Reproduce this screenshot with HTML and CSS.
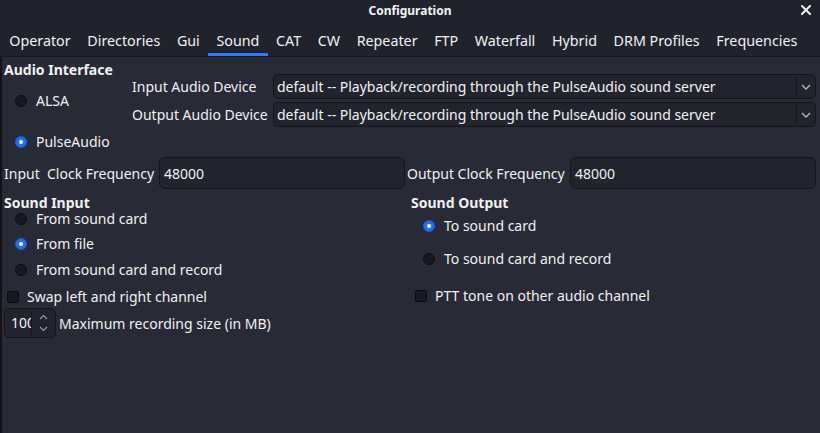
FILE: index.html
```html
<!DOCTYPE html>
<html>
<head>
<meta charset="utf-8">
<link rel="stylesheet" href="styles.css">
</head>
<body>
<div class="window">
  <div class="titlebar">
    <span class="title">Configuration</span>
    <span class="close">
      <svg width="10" height="10" viewBox="0 0 10 10"><path d="M1 1 L9 9 M9 1 L1 9" stroke="#f2f2f2" stroke-width="2" stroke-linecap="square"/></svg>
    </span>
  </div>
  <div class="tabs">
    <span class="tab">Operator</span>
    <span class="tab">Directories</span>
    <span class="tab">Gui</span>
    <span class="tab active">Sound</span>
    <span class="tab">CAT</span>
    <span class="tab">CW</span>
    <span class="tab">Repeater</span>
    <span class="tab">FTP</span>
    <span class="tab">Waterfall</span>
    <span class="tab">Hybrid</span>
    <span class="tab">DRM Profiles</span>
    <span class="tab">Frequencies</span>
  </div>
  <div class="panel">
    <div class="iface">
      <div class="iface-left">
        <div class="heading">Audio Interface</div>
        <div class="opt alsa"><span class="radio"></span>ALSA</div>
        <div class="opt pulse"><span class="radio on"></span>PulseAudio</div>
      </div>
      <div class="devices">
        <div class="dev-label">Input Audio Device</div>
        <div class="combo"><span class="combo-text">default -- Playback/recording through the PulseAudio sound server</span><span class="combo-btn"><svg width="10" height="6" viewBox="0 0 10 6"><path d="M1 1 L5 5 L9 1" fill="none" stroke="#b8bac0" stroke-width="1.3"/></svg></span></div>
        <div class="dev-label">Output Audio Device</div>
        <div class="combo"><span class="combo-text">default -- Playback/recording through the PulseAudio sound server</span><span class="combo-btn"><svg width="10" height="6" viewBox="0 0 10 6"><path d="M1 1 L5 5 L9 1" fill="none" stroke="#b8bac0" stroke-width="1.3"/></svg></span></div>
      </div>
    </div>
    <div class="clock">
      <span class="clk-label in">Input&nbsp; Clock Frequency</span>
      <div class="field f-in">48000</div>
      <span class="clk-label out">Output Clock Frequency</span>
      <div class="field f-out">48000</div>
    </div>
    <div class="sound">
      <div class="col left">
        <div class="heading">Sound Input</div>
        <div class="opt s1"><span class="radio"></span>From sound card</div>
        <div class="opt s2"><span class="radio on"></span>From file</div>
        <div class="opt s3"><span class="radio"></span>From sound card and record</div>
        <div class="chk"><span class="box"></span>Swap left and right channel</div>
        <div class="spinrow">
          <div class="spin"><span class="spin-val">100</span><span class="spin-btns">
            <svg width="9" height="6" viewBox="0 0 9 6"><path d="M1 5 L4.5 1.5 L8 5" fill="none" stroke="#9a9ca3" stroke-width="1.1"/></svg>
            <svg width="9" height="6" viewBox="0 0 9 6"><path d="M1 1 L4.5 4.5 L8 1" fill="none" stroke="#9a9ca3" stroke-width="1.1"/></svg>
          </span></div>
          <span class="spin-label">Maximum recording size (in MB)</span>
        </div>
      </div>
      <div class="col right">
        <div class="heading">Sound Output</div>
        <div class="opt o1"><span class="radio on"></span>To sound card</div>
        <div class="opt o2"><span class="radio"></span>To sound card and record</div>
        <div class="chk ptt"><span class="box"></span>PTT tone on other audio channel</div>
      </div>
    </div>
  </div>
</div>
</body>
</html>
```
FILE: styles.css
```css
* { box-sizing: border-box; }
html, body { margin: 0; padding: 0; }
body {
  width: 820px;
  height: 433px;
  overflow: hidden;
  background: #20232b;
  font-family: "Noto Sans", "DejaVu Sans", sans-serif;
  font-size: 14px;
  color: #f0f1f4;
}
.window { width: 820px; height: 433px; display: flex; flex-direction: column; }
.titlebar {
  height: 20px;
  display: flex;
  align-items: center;
  justify-content: center;
  position: relative;
  font-size: 12px;
  font-weight: bold;
  color: #f4f4f6;
}
.close { position: absolute; right: 9px; top: 5px; line-height: 0; }
.tabs {
  height: 36px;
  display: flex;
  padding-left: 1px;
  align-items: stretch;
}
.tab {
  padding: 11px 8.3px 0 8.3px;
  font-size: 14.3px;
  border-bottom: 3px solid transparent;
}
.tab.active { border-bottom-color: #2a7cf6; }
.panel {
  flex: 1;
  background: #282a35;
  border-top: 1px solid #17181d;
  border-left: 2px solid #121317;
  padding: 0 4px 0 2px;
  display: flex;
  flex-direction: column;
}
.heading { font-weight: bold; line-height: 20px; }
.iface { display: flex; align-items: flex-start; }
.iface-left { width: 128px; padding-top: 3px; }
.opt { display: flex; align-items: center; line-height: 20px; }
.radio {
  width: 12px; height: 12px; border-radius: 50%;
  background: #17191e;
  border: 1px solid #0c0d10;
  margin: 0 9px 0 11px;
  flex: none;
  position: relative;
}
.radio.on { background: #1f6ff0; border-color: #1a5fd0; }
.radio.on::after {
  content: ""; position: absolute; left: 3px; top: 3px;
  width: 4px; height: 4px; border-radius: 50%; background: #fff;
}
.alsa { margin-top: 11px; }
.pulse { margin-top: 21px; }
.devices {
  flex: 1;
  display: grid;
  grid-template-columns: 141px 1fr;
  row-gap: 3px;
  align-items: center;
  align-content: start;
  padding-top: 17px;
}
.dev-label { white-space: nowrap; }
.combo {
  height: 25px;
  border: 1px solid #15161b;
  border-radius: 5px;
  background: #22242d;
  display: flex;
  align-items: center;
}
.combo-text { flex: 1; padding-left: 3px; white-space: nowrap; overflow: hidden; }
.combo-btn {
  width: 19px; height: 19px;
  border-left: 1px solid #15161b;
  display: flex; align-items: center; justify-content: center;
}
.clock {
  display: flex;
  align-items: center;
  margin-top: 5px;
}
.clk-label { white-space: nowrap; }
.clk-label.in { width: 155px; }
.clk-label.out { width: 163px; }
.field {
  height: 32px;
  border: 1px solid #15161b;
  border-radius: 6px;
  background: #22242d;
  display: flex;
  align-items: center;
  padding-left: 4px;
}
.f-in { width: 246px; margin-right: 2px; }
.f-out { width: 246px; }
.sound { display: flex; margin-top: 4px; }
.col.left { width: 407px; }
.col.right { flex: 1; }
.s1 { margin-top: -4px; }
.s2 { margin-top: 5px; }
.s3 { margin-top: 6px; }
.o1 { margin-top: 3px; }
.o2 { margin-top: 13px; }
.chk { display: flex; align-items: center; line-height: 20px; margin-top: 7px; }
.box {
  width: 12px; height: 12px; border-radius: 2px;
  background: #17191e; border: 1px solid #0c0d10;
  margin: 0 8px 0 3px; flex: none;
}
.ptt { margin-top: 17px; padding-left: 1px; }
.spinrow { display: flex; align-items: center; margin-top: 1px; }
.spin {
  width: 52px; height: 30px;
  border: 1px solid #15161b;
  border-radius: 5px;
  background: #22242d;
  display: flex;
}
.spin-val {
  width: 27px; overflow: hidden; padding-left: 6px;
  line-height: 28px; white-space: nowrap;
  border-right: 1px solid #15161b;
  border-radius: 0 5px 5px 0;
}
.spin-btns { flex: 1; display: flex; flex-direction: column; align-items: center; justify-content: space-evenly; }
.spin-btns svg { display: block; }
.spin-label { margin-left: 3px; }
.col.right .opt .radio { margin-left: 12px; }
```
